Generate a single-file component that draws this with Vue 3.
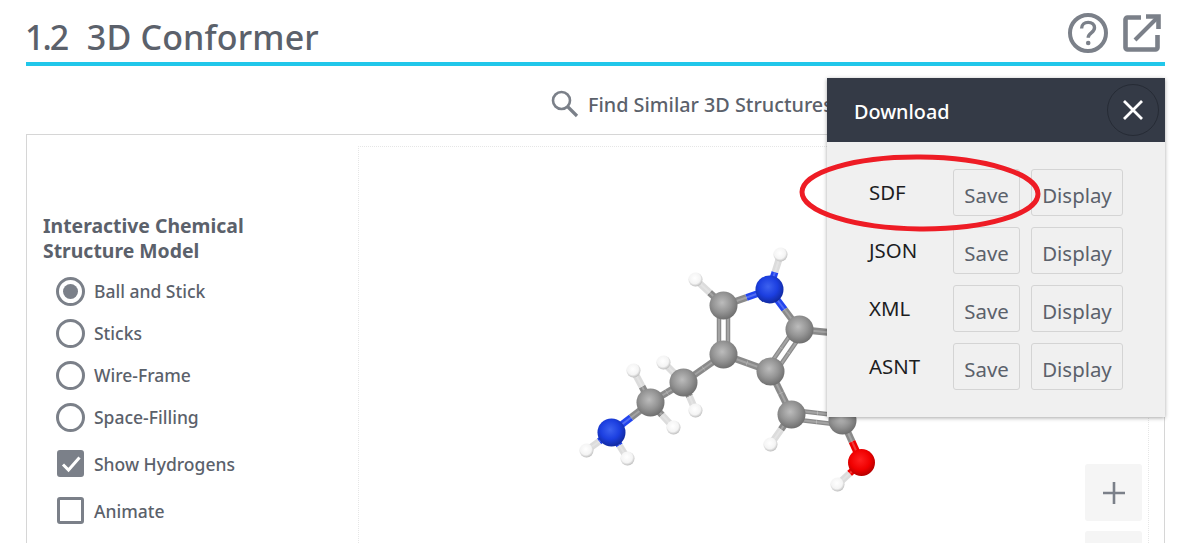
<script setup>
const modes = [
  { label: 'Ball and Stick', on: true },
  { label: 'Sticks', on: false },
  { label: 'Wire-Frame', on: false },
  { label: 'Space-Filling', on: false }
]
const formats = ['SDF', 'JSON', 'XML', 'ASNT']

// Atom coordinates are relative to the viewer box
const raw = {
  n1: [769, 289, 'N'], c1: [723, 305, 'C'], c2: [799, 329, 'C'], c3: [723, 354, 'C'], c4: [770, 371, 'C'],
  c5: [683, 382, 'C'], c6: [650, 402, 'C'], n2: [611, 432, 'N'], c7: [791, 414, 'C'], c8: [842, 420, 'C'],
  o1: [861, 462, 'O'], h1: [695, 279, 'H'], h2: [780, 254, 'H'], h3: [586, 450, 'H'], h4: [627, 458, 'H'],
  h5: [633, 370, 'H'], h6: [673, 427, 'H'], h7: [663, 362, 'H'], h8: [695, 410, 'H'], h9: [770, 444, 'H'],
  h10: [837, 484, 'H'], x1: [860, 335, 'C']
}
const pos = Object.fromEntries(Object.entries(raw).map(([k, v]) => [k, { x: v[0] - 358.5, y: v[1] - 146.5, t: v[2] }]))
const colors = { C: '#8a8a8a', N: '#2244ee', O: '#ee0000', H: '#dcdcdc' }
const radius = { C: 14, N: 14, O: 13.5, H: 7 }
const links = [
  ['c1', 'n1'], ['n1', 'c2'], ['n1', 'h2'], ['c1', 'h1'], ['c3', 'c4'], ['c3', 'c5'], ['c5', 'c6'], ['c6', 'n2'],
  ['n2', 'h3'], ['n2', 'h4'], ['c6', 'h5'], ['c6', 'h6'], ['c5', 'h7'], ['c5', 'h8'], ['c4', 'c7'], ['c7', 'h9'],
  ['c8', 'o1'], ['o1', 'h10'], ['c2', 'x1']
]
const doubles = [['c1', 'c3'], ['c2', 'c4'], ['c7', 'c8']]

const segments = []
function half(a, b, off) {
  const A = pos[a], B = pos[b]
  const dx = B.x - A.x, dy = B.y - A.y, l = Math.hypot(dx, dy)
  const ox = (-dy / l) * off, oy = (dx / l) * off
  const mx = (A.x + B.x) / 2, my = (A.y + B.y) / 2
  const w = off ? 4.5 : 7
  segments.push({ x1: A.x + ox, y1: A.y + oy, x2: mx + ox, y2: my + oy, c: colors[A.t], w })
  segments.push({ x1: mx + ox, y1: my + oy, x2: B.x + ox, y2: B.y + oy, c: colors[B.t], w })
}
links.forEach(([a, b]) => half(a, b, 0))
doubles.forEach(([a, b]) => { half(a, b, 4.5); half(a, b, -4.5) })

const atoms = Object.entries(pos).filter(([k]) => k !== 'x1').map(([k, p]) => ({ k, x: p.x, y: p.y, r: radius[p.t], fill: 'url(#ball' + p.t + ')' }))
</script>

<template>
  <div class="page">
    <header class="title-row">
      <h2 class="title"><span class="num">1.2</span>&nbsp;&nbsp;<span class="name">3D Conformer</span></h2>
      <div class="title-icons">
        <svg width="42" height="42" viewBox="0 0 42 42" fill="none" stroke="#7b8089" stroke-width="4">
          <circle cx="21" cy="21" r="18" />
          <path d="M14.600 16.500c0-3.800 2.900-6.100 6.600-6.100s6.300 2.200 6.300 5.400c0 5.200-6.300 5-6.300 9.900" stroke-width="3.400" />
          <circle cx="21.200" cy="31" r="2.300" fill="#7b8089" stroke="none" />
        </svg>
        <svg width="38" height="38" viewBox="0 0 38 38" fill="none" stroke="#7b8089" stroke-width="4.600">
          <path d="M18 3.500H4.500a2 2 0 0 0-2 2v28a2 2 0 0 0 2 2h28a2 2 0 0 0 2-2V21" />
          <path d="M23 2.500h12.500V15" />
          <path d="M35 3 12 26" stroke-width="4" />
        </svg>
      </div>
    </header>

    <div class="find">
      <svg width="28" height="28" viewBox="0 0 28 28" fill="none" stroke="#7b8089">
        <circle cx="10.500" cy="10.500" r="8.500" stroke-width="2.600" />
        <path d="M16.500 16.500 26 26" stroke-width="3.200" />
      </svg>
      <span>Find Similar 3D Structures</span>
    </div>

    <section class="panel">
      <aside class="controls">
        <h3 class="controls-title">Interactive Chemical<br />Structure Model</h3>
        <div v-for="m in modes" :key="m.label" class="radio-row">
          <span class="radio" :class="{ on: m.on }"></span>
          <span>{{ m.label }}</span>
        </div>
        <div class="check-row first">
          <span class="check on">
            <svg width="26" height="26" viewBox="0 0 26 26" fill="none" stroke="#fff" stroke-width="3">
              <path d="M5 13.500 10.500 19 21.500 6.500" />
            </svg>
          </span>
          <span>Show Hydrogens</span>
        </div>
        <div class="check-row">
          <span class="check"></span>
          <span>Animate</span>
        </div>
      </aside>

      <div class="viewer">
        <svg class="molecule" width="790" height="420" viewBox="0 0 790 420">
          <defs>
            <radialGradient id="ballC" cx="45%" cy="40%" r="62%">
              <stop offset="0" stop-color="#bcbcbc" />
              <stop offset="0.55" stop-color="#949494" />
              <stop offset="1" stop-color="#6c6c6c" />
            </radialGradient>
            <radialGradient id="ballN" cx="45%" cy="40%" r="62%">
              <stop offset="0" stop-color="#3d62f0" />
              <stop offset="0.55" stop-color="#1c3fe0" />
              <stop offset="1" stop-color="#10289a" />
            </radialGradient>
            <radialGradient id="ballO" cx="45%" cy="40%" r="62%">
              <stop offset="0" stop-color="#ff2020" />
              <stop offset="0.6" stop-color="#f00000" />
              <stop offset="1" stop-color="#b00000" />
            </radialGradient>
            <radialGradient id="ballH" cx="45%" cy="40%" r="62%">
              <stop offset="0" stop-color="#fff" />
              <stop offset="0.65" stop-color="#f4f4f4" />
              <stop offset="1" stop-color="#b8b8b8" />
            </radialGradient>
          </defs>
          <line v-for="(s, i) in segments" :key="i" :x1="s.x1" :y1="s.y1" :x2="s.x2" :y2="s.y2" :stroke="s.c" :stroke-width="s.w" />
          <line v-for="(s, i) in segments" :key="'h' + i" :x1="s.x1" :y1="s.y1" :x2="s.x2" :y2="s.y2" stroke="#fff" stroke-opacity="0.22" stroke-width="2" />
          <circle v-for="a in atoms" :key="a.k" :cx="a.x" :cy="a.y" :r="a.r" :fill="a.fill" />
        </svg>
        <div class="zoom-stack">
          <button class="zoom-btn">
            <svg width="22" height="22" viewBox="0 0 22 22" stroke="#7b8089" stroke-width="2.600">
              <path d="M11 0v22M0 11h22" />
            </svg>
          </button>
          <button class="zoom-btn"></button>
        </div>
      </div>
    </section>

    <div class="download">
      <div class="download-head">
        <span class="download-label">Download</span>
        <button class="close">
          <svg width="22" height="22" viewBox="0 0 22 22" stroke="#fff" stroke-width="2.800">
            <path d="M2 2 20 20M20 2 2 20" />
          </svg>
        </button>
      </div>
      <div class="download-body">
        <template v-for="f in formats" :key="f">
          <span class="fmt">{{ f }}</span>
          <button class="btn save">Save</button>
          <button class="btn display">Display</button>
        </template>
      </div>
    </div>

    <svg class="annot" width="250" height="84" viewBox="0 0 250 84" fill="none">
      <ellipse cx="125" cy="42" rx="118" ry="36" stroke="#ee1c25" stroke-width="5" />
    </svg>
  </div>
</template>

<style>
html, body { margin: 0; background: #fff; overflow: hidden; }
</style>

<style scoped>
.page {
  position: relative;
  width: 1182px;
  height: 543px;
  overflow: hidden;
  padding: 0 17px 0 26px;
  box-sizing: border-box;
  font-family: "Noto Sans", "Open Sans", sans-serif;
  color: #5b616b;
  background: #fff;
}
.title-row {
  height: 62px;
  border-bottom: 4px solid #21c7ea;
  display: flex;
  justify-content: space-between;
  align-items: flex-start;
}
.title {
  margin: 0;
  padding-top: 14px;
  font-size: 34px;
  line-height: 46px;
  font-weight: 500;
  color: #5b616b;
}
.num { letter-spacing: -2px; margin-left: -1px; margin-right: 2px; }
.name { letter-spacing: 0.150px; }
.title-icons {
  display: flex;
  align-items: center;
  gap: 14px;
  padding: 12px 4px 0 0;
}
.find {
  height: 68px;
  display: flex;
  align-items: center;
  gap: 9px;
  padding: 8px 0 0 525px;
  box-sizing: border-box;
  font-size: 19.800px;
  font-weight: 500;
  white-space: nowrap;
}
.panel {
  display: flex;
  border: 1px solid #d6d6d6;
  padding: 11px 15px 0 16px;
  height: 420px;
  box-sizing: border-box;
}
.controls {
  width: 315px;
  flex: none;
  padding-top: 67px;
  font-size: 17.500px;
  font-weight: 500;
}
.controls-title {
  margin: 0 0 7px;
  font-size: 19.400px;
  line-height: 25px;
  font-weight: 700;
}
.radio-row, .check-row {
  display: flex;
  align-items: center;
  gap: 9px;
  margin-left: 13px;
  height: 42px;
}
.radio {
  width: 29px;
  height: 29px;
  border: 3px solid #7b8089;
  border-radius: 50%;
  box-sizing: border-box;
  position: relative;
}
.radio.on::after {
  content: "";
  position: absolute;
  inset: 4px;
  border-radius: 50%;
  background: #7b8089;
}
.check-row { height: 47px; gap: 10px; margin-left: 14px; }
.check-row.first { margin-top: 2px; }
.check {
  width: 27px;
  height: 27px;
  box-sizing: border-box;
  border: 3px solid #7b8089;
  border-radius: 3px;
  display: flex;
  align-items: center;
  justify-content: center;
}
.check svg { flex: none; }
.check.on { background: #7b8089; }
.viewer {
  position: relative;
  flex: 1;
  border: 1px dotted #e6e6e6;
  border-bottom: none;
  height: 420px;
}
.molecule { position: absolute; left: 0; top: 0; }
.zoom-stack {
  position: absolute;
  right: 6px;
  top: 317px;
  display: flex;
  flex-direction: column;
  gap: 10px;
}
.zoom-btn {
  width: 57px;
  height: 57px;
  border: none;
  border-radius: 3px;
  background: #f5f5f5;
  padding: 0;
  display: flex;
  align-items: center;
  justify-content: center;
}
.download {
  position: absolute;
  left: 827px;
  top: 78px;
  width: 338px;
  background: #f0f0f0;
  box-shadow: 0 1px 4px rgba(0, 0, 0, 0.35);
}
.download-head {
  height: 64px;
  background: #343a46;
  color: #fff;
  display: flex;
  align-items: center;
  justify-content: space-between;
  padding: 0 6px 0 27px;
  font-size: 19.800px;
  font-weight: 500;
}
.download-label { padding-top: 2px; }
.close {
  width: 52px;
  height: 52px;
  border-radius: 50%;
  border: 1px solid #262b35;
  background: transparent;
  padding: 0;
  display: flex;
  align-items: center;
  justify-content: center;
}
.download-body {
  display: grid;
  grid-template-columns: 73px 67px 92px;
  grid-auto-rows: 47px;
  column-gap: 11px;
  row-gap: 11px;
  align-items: stretch;
  padding: 27px 0 27px 42px;
}
.fmt {
  align-self: center;
  margin-top: -2px;
  font-size: 20.400px;
  color: #1d1d1f;
  white-space: nowrap;
}
.btn {
  border: 1px solid #d4d4d4;
  border-radius: 3px;
  background: #f0f0f0;
  font-family: inherit;
  font-size: 20.400px;
  color: #5b616b;
  padding: 5px 0 0;
}
.annot {
  position: absolute;
  left: 795px;
  top: 151px;
  transform: rotate(0.5deg);
}
</style>
